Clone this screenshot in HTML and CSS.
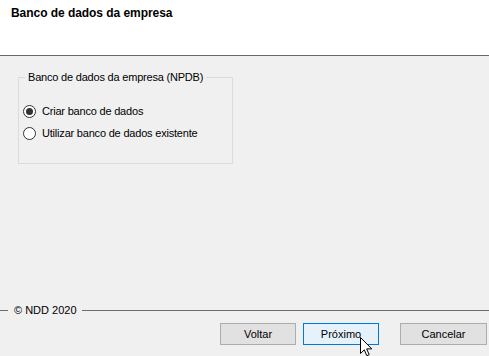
FILE: index.html
```html
<!DOCTYPE html>
<html lang="pt">
<head>
<meta charset="utf-8">
<title>Banco de dados da empresa</title>
<link rel="stylesheet" href="styles.css">
</head>
<body>
<div class="window">
  <header class="banner">
    <h1 class="banner-title">Banco de dados da empresa</h1>
  </header>
  <main class="content">
    <fieldset class="group">
      <legend class="group-legend">Banco de dados da empresa (NPDB)</legend>
      <label class="radio-row">
        <input class="radio" type="radio" name="db" checked>
        <span class="radio-label">Criar banco de dados</span>
      </label>
      <label class="radio-row">
        <input class="radio" type="radio" name="db">
        <span class="radio-label">Utilizar banco de dados existente</span>
      </label>
    </fieldset>
  </main>
  <footer class="footer">
    <div class="brand-rule">
      <span class="rule rule-short"></span>
      <span class="brand">© NDD 2020</span>
      <span class="rule rule-long"></span>
    </div>
    <div class="buttons">
      <button class="btn">Voltar</button>
      <button class="btn btn-focus">Próximo</button>
      <button class="btn btn-wide">Cancelar</button>
    </div>
  </footer>
  <svg class="cursor" width="13" height="20" viewBox="0 0 13 20" aria-hidden="true">
    <path d="M0.5 0.5 L0.5 16.5 L4.3 12.8 L6.8 18.7 L9.2 17.7 L6.7 11.9 L11.8 11.9 Z" fill="#fff" stroke="#000" stroke-width="1" stroke-linejoin="miter"/>
  </svg>
</div>
</body>
</html>
```
FILE: styles.css
```css
* { box-sizing: border-box; }
html, body { margin: 0; padding: 0; }
body {
  width: 489px;
  height: 356px;
  overflow: hidden;
  background: #f0f0f0;
  font-family: "Liberation Sans", Arial, sans-serif;
  font-size: 11px;
  color: #000;
}
.window {
  position: relative;
  width: 489px;
  height: 356px;
  display: flex;
  flex-direction: column;
}
.banner {
  height: 56px;
  background: #fff;
  border-bottom: 1px solid #696969;
  padding: 6px 11px 0;
}
.banner-title {
  margin: 0;
  font-size: 12px;
  font-weight: bold;
  line-height: 14px;
  letter-spacing: -0.05px;
}
.content {
  flex: 1;
  padding: 14px 0 0 18px;
}
.group {
  width: 215px;
  height: 94px;
  margin: 0;
  padding: 16px 4px 0 4px;
  border: 1px solid #dcdcdc;
  min-width: 0;
}
.group-legend {
  margin-left: 2px;
  padding: 0 3px;
  line-height: 14px;
  letter-spacing: -0.2px;
}
.radio-row {
  display: flex;
  align-items: center;
  height: 22px;
  gap: 6px;
}
.radio-label { letter-spacing: -0.2px; }
.radio {
  appearance: none;
  -webkit-appearance: none;
  margin: 0;
  width: 13px;
  height: 13px;
  border: 1px solid #333;
  border-radius: 50%;
  background: #fff;
  display: grid;
  place-items: center;
}
.radio:checked::after {
  content: "";
  width: 7px;
  height: 7px;
  border-radius: 50%;
  background: #333;
}
.footer {
  padding-bottom: 11px;
}
.brand-rule {
  display: flex;
  align-items: center;
  height: 14px;
}
.rule {
  height: 1px;
  background: #6d6d6d;
}
.rule-short { width: 8px; }
.rule-long { flex: 1; }
.brand {
  padding: 0 5px 0 6px;
  line-height: 14px;
}
.buttons {
  display: flex;
  margin-top: 6px;
  padding-left: 220px;
}
.btn {
  flex: none;
  width: 76px;
  height: 22px;
  margin: 0 7px 0 0;
  padding: 0;
  border: 1px solid #adadad;
  background: #e1e1e1;
  font-family: inherit;
  font-size: 11px;
  color: #000;
  border-radius: 0;
}
.btn-focus {
  border-color: #0078d7;
  background: #e5f1fb;
  margin-right: 21px;
}
.btn-wide { width: 87px; margin-right: 0; }
.cursor {
  position: absolute;
  left: 360px;
  top: 337px;
}
```
